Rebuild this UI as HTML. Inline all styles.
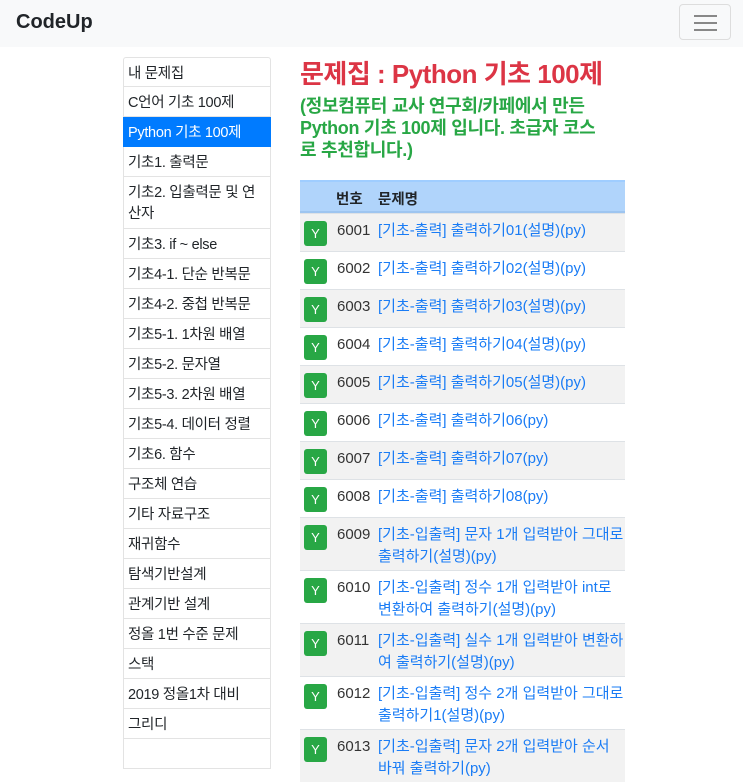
<!DOCTYPE html>
<html><head><meta charset="utf-8"><style>
*{box-sizing:border-box;margin:0;padding:0}
body{width:743px;height:747px;overflow:hidden;background:#fff;font-family:"Liberation Sans","Noto Sans CJK KR",sans-serif;color:#212529;font-size:15px;position:relative}
.nav{position:absolute;left:0;top:0;width:743px;height:47px;background:#f8f9fa}
.brand{position:absolute;left:16px;top:11px;font-size:20px;font-weight:bold;color:#212529}
.tog{position:absolute;left:679px;top:4px;width:52px;height:36px;border:1px solid #ddd;border-radius:4px}
.tog i{position:absolute;left:14px;width:23px;height:2px;background:#888}
.side{position:absolute;left:123px;top:57px;width:148px}
.side div{border:1px solid #e3e3e3;border-top:none;padding:6px 4px 0;line-height:21px;height:30px;font-size:14.5px;letter-spacing:-0.3px}
.side div:first-child{border-top:1px solid #e3e3e3;border-radius:3px 3px 0 0}
.side .act{background:#007bff;color:#fff;border-color:#007bff}
.side .two{height:52px}
h1{position:absolute;left:300px;top:54px;font-size:26px;color:#dc3545;font-weight:bold;letter-spacing:-0.5px;white-space:nowrap}
h2{position:absolute;left:300px;top:95px;width:340px;font-size:18px;line-height:22px;color:#28a745;font-weight:bold;letter-spacing:-0.3px;white-space:nowrap}
.tbl{position:absolute;left:300px;top:180px;width:325px}
.hd{background:#b0d4fb;height:33px;border-top:2px solid #9fcdff;border-bottom:2px solid #9ec5f0;font-weight:bold;font-size:14.5px;position:relative}
.hd span{position:absolute;top:6px}
.r{position:relative;border-top:1px solid #dee2e6;height:38px}
.r.t{height:53px}
.r.g{background:#f2f2f2}
.b{position:absolute;left:4px;top:7px;width:23px;height:25px;background:#28a745;color:#fff;border-radius:3px;text-align:center;font-size:13px;line-height:25px}
.n{position:absolute;left:37px;top:6px;color:#333;line-height:22px}
.l{position:absolute;left:78px;top:6px;color:#1a7cf5;line-height:22px;white-space:nowrap;font-size:15px}
</style></head><body>
<div class="nav"><div class="brand">CodeUp</div><div class="tog"><i style="top:10px"></i><i style="top:17px"></i><i style="top:24px"></i></div></div>
<div class="side">
<div>내 문제집</div><div>C언어 기초 100제</div><div class="act">Python 기초 100제</div><div>기초1. 출력문</div><div class="two">기초2. 입출력문 및 연산자</div><div>기초3. if ~ else</div><div>기초4-1. 단순 반복문</div><div>기초4-2. 중첩 반복문</div><div>기초5-1. 1차원 배열</div><div>기초5-2. 문자열</div><div>기초5-3. 2차원 배열</div><div>기초5-4. 데이터 정렬</div><div>기초6. 함수</div><div>구조체 연습</div><div>기타 자료구조</div><div>재귀함수</div><div>탐색기반설계</div><div>관계기반 설계</div><div>정올 1번 수준 문제</div><div>스택</div><div>2019 정올1차 대비</div><div>그리디</div><div></div>
</div>
<h1>문제집 : Python 기초 100제</h1>
<h2>(정보컴퓨터 교사 연구회/카페에서 만든<br>Python 기초 100제 입니다. 초급자 코스<br>로 추천합니다.)</h2>
<div class="tbl">
<div class="hd"><span style="left:36px">번호</span><span style="left:78px">문제명</span></div>
<div class="r g"><span class="b">Y</span><span class="n">6001</span><span class="l">[기초-출력] 출력하기01(설명)(py)</span></div>
<div class="r"><span class="b">Y</span><span class="n">6002</span><span class="l">[기초-출력] 출력하기02(설명)(py)</span></div>
<div class="r g"><span class="b">Y</span><span class="n">6003</span><span class="l">[기초-출력] 출력하기03(설명)(py)</span></div>
<div class="r"><span class="b">Y</span><span class="n">6004</span><span class="l">[기초-출력] 출력하기04(설명)(py)</span></div>
<div class="r g"><span class="b">Y</span><span class="n">6005</span><span class="l">[기초-출력] 출력하기05(설명)(py)</span></div>
<div class="r"><span class="b">Y</span><span class="n">6006</span><span class="l">[기초-출력] 출력하기06(py)</span></div>
<div class="r g"><span class="b">Y</span><span class="n">6007</span><span class="l">[기초-출력] 출력하기07(py)</span></div>
<div class="r"><span class="b">Y</span><span class="n">6008</span><span class="l">[기초-출력] 출력하기08(py)</span></div>
<div class="r g t"><span class="b">Y</span><span class="n">6009</span><span class="l">[기초-입출력] 문자 1개 입력받아 그대로<br>출력하기(설명)(py)</span></div>
<div class="r t"><span class="b">Y</span><span class="n">6010</span><span class="l">[기초-입출력] 정수 1개 입력받아 int로<br>변환하여 출력하기(설명)(py)</span></div>
<div class="r g t"><span class="b">Y</span><span class="n">6011</span><span class="l">[기초-입출력] 실수 1개 입력받아 변환하<br>여 출력하기(설명)(py)</span></div>
<div class="r t"><span class="b">Y</span><span class="n">6012</span><span class="l">[기초-입출력] 정수 2개 입력받아 그대로<br>출력하기1(설명)(py)</span></div>
<div class="r g t"><span class="b">Y</span><span class="n">6013</span><span class="l">[기초-입출력] 문자 2개 입력받아 순서<br>바꿔 출력하기(py)</span></div>
</div>
</body></html>
